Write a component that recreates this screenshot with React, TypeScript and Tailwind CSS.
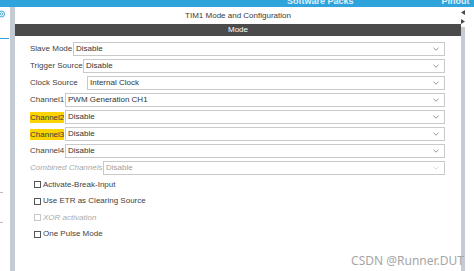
import React from "react";

function Chevron({ light }: { light?: boolean }) {
  return (
    <svg width="6" height="4" viewBox="0 0 6 4" className="shrink-0">
      <path d="M0.5 0.8 L3 3.2 L5.5 0.8" fill="none" stroke={light ? "#cfcfcf" : "#8a8a8a"} strokeWidth="0.9" />
    </svg>
  );
}

function SelectRow({
  label,
  value,
  labelW,
  highlight,
  disabled,
}: {
  label: string;
  value: string;
  labelW: string;
  highlight?: boolean;
  disabled?: boolean;
}) {
  return (
    <div className="flex h-[14px] items-center">
      <div className={`${labelW} shrink-0 flex items-center`}>
        <span
          className={
            highlight
              ? "bg-[#fbd300] text-[#3a3a3a] leading-[11px]"
              : disabled
              ? "italic text-[#a9a9a9]"
              : "text-[#3f3f3f]"
          }
        >
          {label}
        </span>
      </div>
      <div className="flex-1 h-[14px] border border-[#c9c9c9] bg-white flex items-center justify-between pl-[2px] pr-[5px]">
        <span className={disabled ? "text-[#a0a0a0]" : "text-[#333]"}>{value}</span>
        <Chevron light={disabled} />
      </div>
    </div>
  );
}

function CheckRow({ label, disabled }: { label: string; disabled?: boolean }) {
  return (
    <div className="h-[16.5px] flex items-center pl-[19px] gap-[2px]">
      <div
        className={`w-[7px] h-[7px] border bg-white ${disabled ? "border-[#c8c8c8]" : "border-[#555]"}`}
      />
      <span className={disabled ? "italic text-[#ababab]" : "text-[#3f3f3f]"}>{label}</span>
    </div>
  );
}

export default function App() {
  return (
    <div className="w-[474px] h-[271px] overflow-hidden relative bg-white font-['Liberation_Sans',Arial,sans-serif] text-[8px] leading-[10px]">
      {/* top bar */}
      <div className="h-[7px] bg-[#2fa3dc] overflow-hidden flex">
        <span className="ml-[287px] -mt-[4px] text-[9px] leading-[10px] font-bold text-[#dff1fb] whitespace-nowrap">
          Software Packs
        </span>
        <span className="ml-[88px] -mt-[4px] text-[9px] leading-[10px] font-bold text-[#dff1fb] whitespace-nowrap">
          Pinout
        </span>
      </div>

      <div className="flex h-[264px]">
        {/* left sidebar */}
        <div className="w-[10px] shrink-0 flex flex-col overflow-hidden bg-white">
          <div className="pt-[3px] -ml-[3px]">
            <svg width="9" height="8" viewBox="0 0 9 8">
              <circle cx="4.5" cy="4" r="3" fill="none" stroke="#3a9fd6" strokeWidth="1" />
              <circle cx="4.5" cy="4" r="1.2" fill="none" stroke="#3a9fd6" strokeWidth="0.8" />
            </svg>
          </div>
          <div className="mt-[20px] h-[1px] w-[9px] bg-[#3aa2da]" />
          <div className="mt-[153px] h-[1px] w-[3px] bg-[#bdbdbd]" />
          <div className="mt-[29px] h-[1px] w-[3px] bg-[#bdbdbd]" />
        </div>
        <div className="w-[5px] shrink-0 bg-[#c4cbd3]" />

        {/* main panel */}
        <div className="w-[446px] shrink-0 flex flex-col bg-white">
          <div className="h-[17px] flex items-center justify-center text-[#3a3a3a]">
            TIM1 Mode and Configuration
          </div>
          <div className="h-[12px] bg-[#4b4b4b] flex items-center justify-center text-white">Mode</div>
          <div className="pl-[15px] pr-[16px] pt-[6px] flex flex-col gap-[3px]">
            <SelectRow label="Slave Mode" value="Disable" labelW="w-[43px]" />
            <SelectRow label="Trigger Source" value="Disable" labelW="w-[53px]" />
            <SelectRow label="Clock Source" value="Internal Clock" labelW="w-[57px]" />
            <SelectRow label="Channel1" value="PWM Generation CH1" labelW="w-[35px]" />
            <SelectRow label="Channel2" value="Disable" labelW="w-[35px]" highlight />
            <SelectRow label="Channel3" value="Disable" labelW="w-[35px]" highlight />
            <SelectRow label="Channel4" value="Disable" labelW="w-[35px]" />
            <SelectRow label="Combined Channels" value="Disable" labelW="w-[73px]" disabled />
          </div>
          <div className="pt-[1.5px] flex flex-col">
            <CheckRow label="Activate-Break-Input" />
            <CheckRow label="Use ETR as Clearing Source" />
            <CheckRow label="XOR activation" disabled />
            <CheckRow label="One Pulse Mode" />
          </div>
        </div>

        {/* right scroll edge */}
        <div className="w-[4px] shrink-0 flex flex-col">
          <div className="h-[20px] flex flex-col items-center pt-[3px] gap-[4px] bg-white">
            <svg width="4" height="5" viewBox="0 0 4 5">
              <path d="M4 0 L0 2.5 L4 5 Z" fill="#4a4a4a" />
            </svg>
            <svg width="4" height="5" viewBox="0 0 4 5">
              <path d="M0 0 L4 2.5 L0 5 Z" fill="#4a4a4a" />
            </svg>
          </div>
          <div className="flex-1 bg-[#c4cbd3]" />
        </div>
        <div className="w-[9px] shrink-0 bg-white" />
      </div>

      <div className="absolute right-[10px] bottom-[2px] font-['Noto_Sans',sans-serif] text-[12px] leading-[16px] text-[#a6a6a6]">
        CSDN @Runner.DUT
      </div>
    </div>
  );
}
